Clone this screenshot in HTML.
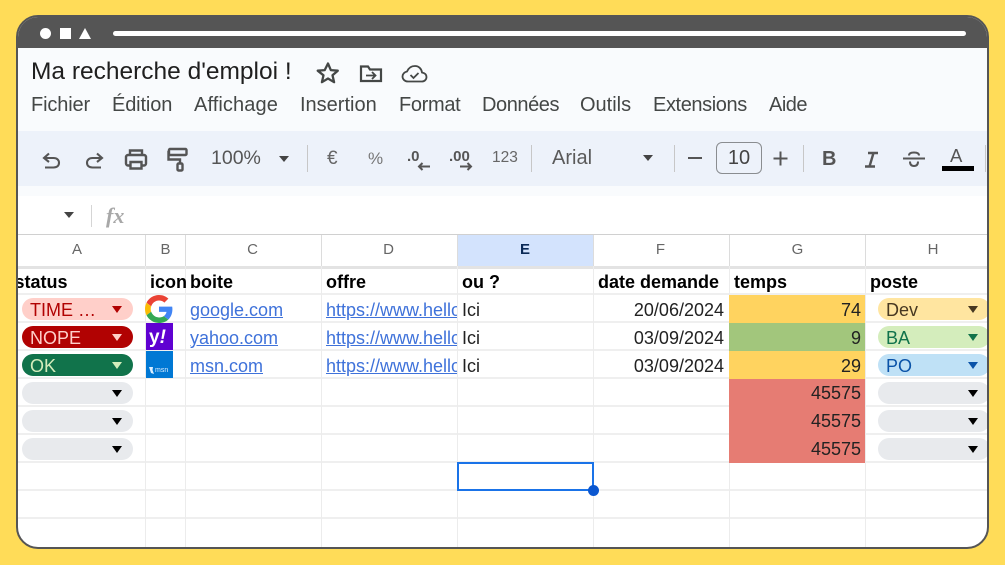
<!DOCTYPE html>
<html><head><meta charset="utf-8">
<style>
html,body{margin:0;padding:0;width:1005px;height:565px;overflow:hidden;background:#ffdc58;font-family:"Liberation Sans",sans-serif}
#frame{position:absolute;left:16px;top:15px;width:973px;height:534px;box-sizing:border-box;border:2px solid #555;border-radius:22px;overflow:hidden;background:#fff}
#root{position:absolute;left:-18px;top:-17px;width:1005px;height:565px}
.a{position:absolute}
.t{position:absolute;white-space:nowrap}
.m{color:#444746;top:94px;line-height:22px;font-size:20px}
.tb{color:#555;top:147px;line-height:22px}
.ch{position:absolute;top:235px;height:31px;line-height:30px;text-align:center;font-size:15px;color:#666;background:#fff}
.v{position:absolute;top:266px;width:1px;height:282px;background:#ececec}
.vh{position:absolute;top:235px;width:1px;height:31px;background:#dcdcdc}
.hl{position:absolute;left:18px;width:969px;height:2px;background:#efefef}
.c{position:absolute;font-size:18px;line-height:22px;color:#222;white-space:nowrap;overflow:hidden}
.b{font-weight:bold;color:#000;font-size:18px}
.l{color:#3f72da;text-decoration:underline}
.r{text-align:right}
.pill{position:absolute;height:22px;border-radius:11px;font-size:18px;line-height:24px;box-sizing:border-box;padding-left:8px;white-space:nowrap;overflow:hidden}
.arr{position:absolute;width:0;height:0;border-left:5.5px solid transparent;border-right:5.5px solid transparent;border-top:7px solid #000}
.g{position:absolute;left:729px;width:136px;height:28px;box-sizing:border-box;padding-right:4px;text-align:right;font-size:18px;line-height:30px;color:#222}
</style></head><body>
<div id="frame"><div id="root">
<div class="a" style="left:18px;top:17px;width:969px;height:31px;background:#555"></div>
<div class="a" style="left:40px;top:28px;width:11px;height:11px;border-radius:50%;background:#fff"></div>
<div class="a" style="left:60px;top:28px;width:11px;height:11px;background:#fff"></div>
<div class="a" style="left:79px;top:28px;width:0;height:0;border-left:6px solid transparent;border-right:6px solid transparent;border-bottom:11px solid #fff"></div>
<div class="a" style="left:113px;top:31px;width:853px;height:5px;border-radius:3px;background:#fff"></div>

<div class="a" style="left:18px;top:48px;width:969px;height:83px;background:#f9fbfd"></div>
<div class="t" style="left:31px;top:58px;font-size:24.5px;line-height:28px;color:#1f1f1f">Ma recherche d'emploi !</div>
<svg class="a" style="left:316px;top:61px" width="24" height="23" viewBox="0 0 24 23" fill="none" stroke="#444746" stroke-width="2.300" stroke-linejoin="round"><path d="M12 2.500l2.800 6.600 7 .6-5.300 4.600 1.600 6.900-6.100-3.700-6.100 3.700 1.600-6.900L1.700 9.700l7-.6z"/></svg>
<svg class="a" style="left:359px;top:64px" width="24" height="20" viewBox="0 0 24 20" fill="none" stroke="#444746" stroke-width="2.200"><path d="M2 4V17H22V5.500H11L9 2.500H2z"/><path d="M7 11.500H16M13 8l3.500 3.500L13 15" stroke-width="1.800"/></svg>
<svg class="a" style="left:401px;top:64px" width="27" height="19" viewBox="0 0 27 19" fill="none" stroke="#444746" stroke-width="1.800"><path d="M7 17.500C3.500 17.500 1.500 15 1.500 12.500 1.500 10 3.500 8 6 7.500 7.500 4 10.500 2 14 2 18 2 20.500 5 21 8.500 23.500 9 25.500 10.500 25.500 13 25.500 15.500 23.500 17.500 21 17.500z"/><path d="M9.500 11l3 3 5-5"/></svg>

<div class="t m" style="left:31px;letter-spacing:-.14px">Fichier</div>
<div class="t m" style="left:112px;letter-spacing:-.14px">Édition</div>
<div class="t m" style="left:194px;letter-spacing:.1px">Affichage</div>
<div class="t m" style="left:300px">Insertion</div>
<div class="t m" style="left:399px;letter-spacing:-.33px">Format</div>
<div class="t m" style="left:482px;letter-spacing:-.43px">Données</div>
<div class="t m" style="left:580px">Outils</div>
<div class="t m" style="left:653px;letter-spacing:-.4px">Extensions</div>
<div class="t m" style="left:769px;letter-spacing:-.5px">Aide</div>

<div class="a" style="left:18px;top:131px;width:969px;height:55px;background:#edf2fa"></div>
<div class="a" style="left:18px;top:186px;width:969px;height:10px;background:#f9fbfd"></div>

<svg class="a" style="left:42px;top:152px" width="20" height="18" viewBox="0 0 20 18" fill="none" stroke="#555" stroke-width="2.100"><path d="M7 1.500L2 6l5 4"/><path d="M2.500 6H11.500C15 6 17 8 17 10.800 17 13.700 15 15.500 11.500 15.500H3"/></svg>
<svg class="a" style="left:84px;top:152px" width="20" height="18" viewBox="0 0 20 18" fill="none" stroke="#555" stroke-width="2.100"><path d="M13 1.500L18 6l-5 4"/><path d="M17.500 6H8.500C5 6 3 8 3 10.800 3 13.700 5 15.500 8.500 15.500H17"/></svg>
<svg class="a" style="left:124px;top:148px" width="24" height="24" viewBox="0 0 24 24" fill="none" stroke="#555" stroke-width="2.400"><path d="M6 7V2.500H18V7"/><rect x="2" y="7" width="20" height="10.500" rx="2"/><path d="M6.500 14H17.500V20.500H6.500z" fill="#edf2fa"/></svg>
<svg class="a" style="left:166px;top:147px" width="24" height="26" viewBox="0 0 24 26" fill="none" stroke="#555" stroke-width="2.400"><rect x="3" y="2" width="17.500" height="6" rx="1"/><path d="M3 5H2.500V12.500H14V16"/><rect x="11.500" y="16.500" width="5" height="7" rx="1"/></svg>
<div class="t tb" style="left:211px;font-size:19.5px">100%</div>
<div class="arr" style="left:279px;top:156px;border-top-color:#444;border-top-width:6px"></div>
<div class="a" style="left:307px;top:145px;width:1px;height:27px;background:#c7c7c7"></div>
<div class="t tb" style="left:327px;font-size:19px;top:148px;color:#666">€</div>
<div class="t tb" style="left:368px;font-size:17px;color:#777;top:148px">%</div>
<div class="t" style="left:407px;top:148px;font-size:15px;font-weight:bold;line-height:18px;color:#555">.0</div>
<svg class="a" style="left:416px;top:161px" width="16" height="11" viewBox="0 0 16 11" fill="none" stroke="#555" stroke-width="2"><path d="M14 5.500H3M6.500 2L3 5.500 6.500 9"/></svg>
<div class="t" style="left:449px;top:148px;font-size:15px;font-weight:bold;line-height:18px;color:#555">.00</div>
<svg class="a" style="left:458px;top:161px" width="16" height="11" viewBox="0 0 16 11" fill="none" stroke="#555" stroke-width="2"><path d="M2 5.500H13M9.500 2L13 5.500 9.500 9"/></svg>
<div class="t tb" style="left:492px;font-size:15.5px;color:#666">123</div>
<div class="a" style="left:531px;top:145px;width:1px;height:27px;background:#c7c7c7"></div>
<div class="t tb" style="left:552px;font-size:20px;color:#5a5a5a">Arial</div>
<div class="arr" style="left:643px;top:155px;border-top-color:#444;border-top-width:6px"></div>
<div class="a" style="left:674px;top:145px;width:1px;height:27px;background:#c7c7c7"></div>
<div class="a" style="left:688px;top:157px;width:14px;height:2px;background:#555"></div>
<div class="a" style="left:716px;top:142px;width:46px;height:32px;box-sizing:border-box;border:1px solid #8a8d90;border-radius:6px;text-align:center;font-size:20px;line-height:31px;color:#444">10</div>
<svg class="a" style="left:773px;top:151px" width="15" height="15" viewBox="0 0 15 15" stroke="#555" stroke-width="2"><path d="M0.500 7.500H14.500M7.500 0.500V14.500"/></svg>
<div class="a" style="left:803px;top:145px;width:1px;height:27px;background:#c7c7c7"></div>
<div class="t tb" style="left:822px;font-size:20px;font-weight:bold;top:148px">B</div>
<svg class="a" style="left:864px;top:151px" width="15" height="17" viewBox="0 0 15 17" fill="none" stroke="#555" stroke-width="2.400"><path d="M4 2H14M1 15.500H11M9.500 2L5.500 15.500"/></svg>
<svg class="a" style="left:903px;top:149px" width="22" height="20" viewBox="0 0 22 20" fill="none" stroke="#555" stroke-width="2"><path d="M0 9.500H22"/><path d="M6 6.500C6 4.500 8 3.500 11 3.500 14 3.500 16 4.500 16 6.500M7 12.500C7 15.500 8.500 17 11 17 13.500 17 15 15.500 15 12.500"/></svg>
<div class="t tb" style="left:950px;font-size:18.5px;top:145px">A</div>
<div class="a" style="left:942px;top:166px;width:32px;height:5px;background:#000"></div>
<div class="a" style="left:985px;top:145px;width:1px;height:27px;background:#c7c7c7"></div>

<div class="arr" style="left:64px;top:212px;border-top-width:6px;border-top-color:#444"></div>
<div class="a" style="left:91px;top:205px;width:1px;height:22px;background:#d5d5d5"></div>
<div class="t" style="left:106px;top:204px;font-family:'Liberation Serif',serif;font-style:italic;font-weight:bold;font-size:22px;line-height:24px;color:#a8a8a8">fx</div>
<div class="a" style="left:18px;top:234px;width:969px;height:1px;background:#d0d0d0"></div>

<div class="ch" style="left:18px;width:118px">A</div>
<div class="ch" style="left:146px;width:39px">B</div>
<div class="ch" style="left:185px;width:135px">C</div>
<div class="ch" style="left:321px;width:135px">D</div>
<div class="ch" style="left:457px;width:136px;background:#d3e3fd;color:#0b2a57;font-weight:bold">E</div>
<div class="ch" style="left:593px;width:135px">F</div>
<div class="ch" style="left:730px;width:135px">G</div>
<div class="ch" style="left:866px;width:134px">H</div>

<div class="vh" style="left:145px"></div>
<div class="vh" style="left:185px"></div>
<div class="vh" style="left:321px"></div>
<div class="vh" style="left:457px"></div>
<div class="vh" style="left:593px"></div>
<div class="vh" style="left:729px"></div>
<div class="vh" style="left:865px"></div>

<div class="hl" style="top:266px;height:3px;background:#e3e3e3"></div>
<div class="hl" style="top:293px"></div>
<div class="hl" style="top:321px"></div>
<div class="hl" style="top:349px"></div>
<div class="hl" style="top:377px"></div>
<div class="hl" style="top:405px"></div>
<div class="hl" style="top:433px"></div>
<div class="hl" style="top:461px"></div>
<div class="hl" style="top:489px"></div>
<div class="hl" style="top:517px"></div>

<div class="v" style="left:145px"></div>
<div class="v" style="left:185px"></div>
<div class="v" style="left:321px"></div>
<div class="v" style="left:457px"></div>
<div class="v" style="left:593px"></div>
<div class="v" style="left:729px"></div>
<div class="v" style="left:865px"></div>

<div class="c b" style="left:18px;top:271px;width:127px;text-indent:-3.5px">status</div>
<div class="c b" style="left:150px;top:271px;width:36px">icon</div>
<div class="c b" style="left:190px;top:271px">boite</div>
<div class="c b" style="left:326px;top:271px">offre</div>
<div class="c b" style="left:462px;top:271px">ou ?</div>
<div class="c b" style="left:598px;top:271px">date demande</div>
<div class="c b" style="left:734px;top:271px">temps</div>
<div class="c b" style="left:870px;top:271px">poste</div>

<div class="pill" style="left:22px;top:298px;width:111px;background:#ffcfc9;color:#b10202">TIME …</div>
<div class="arr" style="left:112px;top:306px;border-top-color:#b10202"></div>
<div class="pill" style="left:22px;top:326px;width:111px;background:#b10202;color:#ffcfc9">NOPE</div>
<div class="arr" style="left:112px;top:334px;border-top-color:#ffcfc9"></div>
<div class="pill" style="left:22px;top:354px;width:111px;background:#11734b;color:#d4edbc">OK</div>
<div class="arr" style="left:112px;top:362px;border-top-color:#d4edbc"></div>
<div class="pill" style="left:22px;top:382px;width:111px;background:#e8eaed"></div>
<div class="arr" style="left:112px;top:390px"></div>
<div class="pill" style="left:22px;top:410px;width:111px;background:#e8eaed"></div>
<div class="arr" style="left:112px;top:418px"></div>
<div class="pill" style="left:22px;top:438px;width:111px;background:#e8eaed"></div>
<div class="arr" style="left:112px;top:446px"></div>

<svg class="a" style="left:145px;top:295px" width="28" height="28" viewBox="0 0 48 48"><path fill="#ea4335" d="M24 9.500c3.500 0 6.700 1.200 9.200 3.600l6.900-6.900C35.900 2.400 30.500 0 24 0 14.600 0 6.500 5.400 2.600 13.200l8 6.200C12.500 13.700 17.800 9.500 24 9.500z"/><path fill="#4285f4" d="M47 24.500c0-1.600-.1-3.100-.4-4.500H24v9h12.900c-.6 3-2.200 5.500-4.700 7.200l7.700 6C44.400 37.900 47 31.800 47 24.500z"/><path fill="#fbbc05" d="M10.500 28.600C10 27.200 9.800 25.600 9.800 24s.3-3.200.7-4.600l-8-6.200C.9 16.400 0 20.100 0 24s.9 7.600 2.600 10.800z"/><path fill="#34a853" d="M24 48c6.500 0 11.900-2.100 15.900-5.800l-7.700-6c-2.200 1.500-5 2.300-8.200 2.300-6.200 0-11.500-4.200-13.400-9.900l-8 6.200C6.500 42.600 14.600 48 24 48z"/></svg>
<div class="a" style="left:146px;top:323px;width:27px;height:27px;background:#5f01d1"></div>
<div class="t" style="left:149px;top:325px;font-size:19px;font-weight:bold;line-height:26px;color:#fff">y<span style="font-style:italic">!</span></div>
<div class="a" style="left:146px;top:351px;width:27px;height:27px;background:#0078d4"></div>
<svg class="a" style="left:149px;top:366px" width="6" height="9" viewBox="0 0 6 9"><path fill="#dbeeff" d="M0 1H4L3.500 4 5 8 2 7z"/></svg>
<div class="t" style="left:155px;top:366px;font-size:7px;line-height:9px;color:#dbeeff">msn</div>

<div class="c l" style="left:190px;top:299px">google.com</div>
<div class="c l" style="left:190px;top:327px">yahoo.com</div>
<div class="c l" style="left:190px;top:355px">msn.com</div>
<div class="c l" style="left:326px;top:299px;width:131px">https://www.hellowork.com</div>
<div class="c l" style="left:326px;top:327px;width:131px">https://www.hellowork.com</div>
<div class="c l" style="left:326px;top:355px;width:131px">https://www.hellowork.com</div>
<div class="c" style="left:462px;top:299px">Ici</div>
<div class="c" style="left:462px;top:327px">Ici</div>
<div class="c" style="left:462px;top:355px">Ici</div>
<div class="c r" style="left:594px;width:130px;top:299px">20/06/2024</div>
<div class="c r" style="left:594px;width:130px;top:327px">03/09/2024</div>
<div class="c r" style="left:594px;width:130px;top:355px">03/09/2024</div>

<div class="g" style="top:295px;background:#ffd35f">74</div>
<div class="g" style="top:323px;background:#a2c67c">9</div>
<div class="g" style="top:351px;background:#ffd35f">29</div>
<div class="g" style="top:379px;background:#e67c73;line-height:29px">45575</div>
<div class="g" style="top:407px;background:#e67c73;line-height:29px">45575</div>
<div class="g" style="top:435px;background:#e67c73;line-height:29px">45575</div>

<div class="pill" style="left:878px;top:298px;width:112px;background:#ffe5a0;color:#473821">Dev</div>
<div class="arr" style="left:968px;top:306px;border-top-color:#473821"></div>
<div class="pill" style="left:878px;top:326px;width:112px;background:#d4edbc;color:#11734b">BA</div>
<div class="arr" style="left:968px;top:334px;border-top-color:#11734b"></div>
<div class="pill" style="left:878px;top:354px;width:112px;background:#bfe1f6;color:#0a53a8">PO</div>
<div class="arr" style="left:968px;top:362px;border-top-color:#0a53a8"></div>
<div class="pill" style="left:878px;top:382px;width:112px;background:#e8eaed"></div>
<div class="arr" style="left:968px;top:390px"></div>
<div class="pill" style="left:878px;top:410px;width:112px;background:#e8eaed"></div>
<div class="arr" style="left:968px;top:418px"></div>
<div class="pill" style="left:878px;top:438px;width:112px;background:#e8eaed"></div>
<div class="arr" style="left:968px;top:446px"></div>

<div class="a" style="left:457px;top:462px;width:137px;height:29px;box-sizing:border-box;border:2px solid #1a73e8"></div>
<div class="a" style="left:588px;top:485px;width:11px;height:11px;border-radius:50%;background:#0b57d0"></div>
</div></div>
</body></html>
